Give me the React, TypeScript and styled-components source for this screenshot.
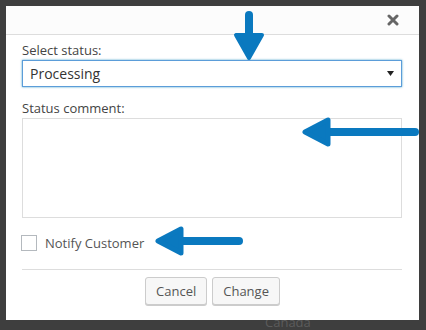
import styled, { createGlobalStyle } from "styled-components";

const GlobalStyle = createGlobalStyle`
  html, body {
    margin: 0;
    padding: 0;
    background: #3e3e3e;
    font-family: "Open Sans", "Noto Sans", sans-serif;
  }
`;

const Page = styled.div`
  position: relative;
  width: 426px;
  height: 330px;
  overflow: hidden;
  padding-top: 6px;
  box-sizing: border-box;
`;

const BehindText = styled.span<{ x: number; y: number }>`
  position: absolute;
  left: ${(p) => p.x}px;
  top: ${(p) => p.y}px;
  color: #5c5c5c;
  font-size: 13px;
  line-height: 14px;
`;

const Dialog = styled.div`
  position: relative;
  margin-left: 6px;
  width: 413px;
  height: 314px;
  background: #fff;
  display: flex;
  flex-direction: column;
`;

const Header = styled.div`
  height: 28px;
  background: #fcfcfc;
  border-bottom: 1px solid #dddddd;
  display: flex;
  justify-content: flex-end;
  align-items: center;
  padding-right: 20px;
`;

const Body = styled.div`
  padding: 6px 16px 0 16px;
  display: flex;
  flex-direction: column;
`;

const Label = styled.div`
  color: #444;
  font-size: 13px;
  line-height: 18px;
  margin-bottom: 1px;
`;

const SelectBox = styled.div`
  width: 380px;
  height: 27px;
  box-sizing: border-box;
  border: 1px solid #5b9dd9;
  box-shadow: 0 0 2px rgba(30, 140, 190, 0.8);
  display: flex;
  align-items: center;
  justify-content: space-between;
  padding: 0 7px 0 7px;
  color: #333;
  font-size: 14px;
  margin-bottom: 12px;
`;

const TextArea = styled.div`
  width: 380px;
  height: 100px;
  box-sizing: border-box;
  border: 1px solid #dddddd;
  margin-top: 0;
`;

const CheckRow = styled.label`
  display: flex;
  align-items: center;
  gap: 8px;
  margin-top: 16px;
  color: #555;
  font-size: 13px;
`;

const Box = styled.span`
  width: 16px;
  height: 16px;
  box-sizing: border-box;
  border: 1px solid #b4b9be;
  background: #fff;
  margin-left: -1px;
`;

const Separator = styled.div`
  width: 380px;
  height: 1px;
  background: #dddddd;
  margin-top: 17px;
`;

const Footer = styled.div`
  display: flex;
  justify-content: center;
  gap: 5px;
  padding-top: 7px;
`;

const Button = styled.button`
  height: 28px;
  padding: 0 10px;
  background: #f7f7f7;
  border: 1px solid #cccccc;
  border-radius: 3px;
  box-shadow: 0 1px 0 #cccccc;
  color: #555;
  font-family: inherit;
  font-size: 13px;
`;

const ArrowSvg = styled.svg`
  position: absolute;
  left: 0;
  top: 0;
  pointer-events: none;
`;

const BLUE = "#0a79bf";

const Arrows = () => (
  <ArrowSvg width="426" height="330" viewBox="0 0 426 330">
    <g fill={BLUE} stroke={BLUE} strokeLinejoin="round" strokeLinecap="round">
      <line x1="249" y1="15" x2="249" y2="38" strokeWidth="8" />
      <polygon points="236,35 262,35 249,58" strokeWidth="4" />
      <line x1="325" y1="132" x2="415" y2="132" strokeWidth="8" />
      <polygon points="305,132 328,120 328,144" strokeWidth="5" />
      <line x1="178" y1="241" x2="239" y2="241" strokeWidth="8" />
      <polygon points="158,241 181,229 181,253" strokeWidth="5" />
    </g>
  </ArrowSvg>
);

const CloseIcon = () => (
  <svg width="12" height="12" viewBox="0 0 12 12">
    <path d="M2 2 L10 10 M10 2 L2 10" stroke="#666" strokeWidth="3" strokeLinecap="round" />
  </svg>
);

const App = () => {
  return (
    <Page>
      <GlobalStyle />
      <BehindText x={265} y={315}>Canada</BehindText>
      <Dialog>
        <Header>
          <CloseIcon />
        </Header>
        <Body>
          <Label>Select status:</Label>
          <SelectBox>
            <span>Processing</span>
            <svg width="7" height="5" viewBox="0 0 7 5">
              <polygon points="0,0 7,0 3.5,5" fill="#222" />
            </svg>
          </SelectBox>
          <Label>Status comment:</Label>
          <TextArea />
          <CheckRow>
            <Box />
            Notify Customer
          </CheckRow>
          <Separator />
          <Footer>
            <Button>Cancel</Button>
            <Button>Change</Button>
          </Footer>
        </Body>
      </Dialog>
      <Arrows />
    </Page>
  );
};

export default App;
